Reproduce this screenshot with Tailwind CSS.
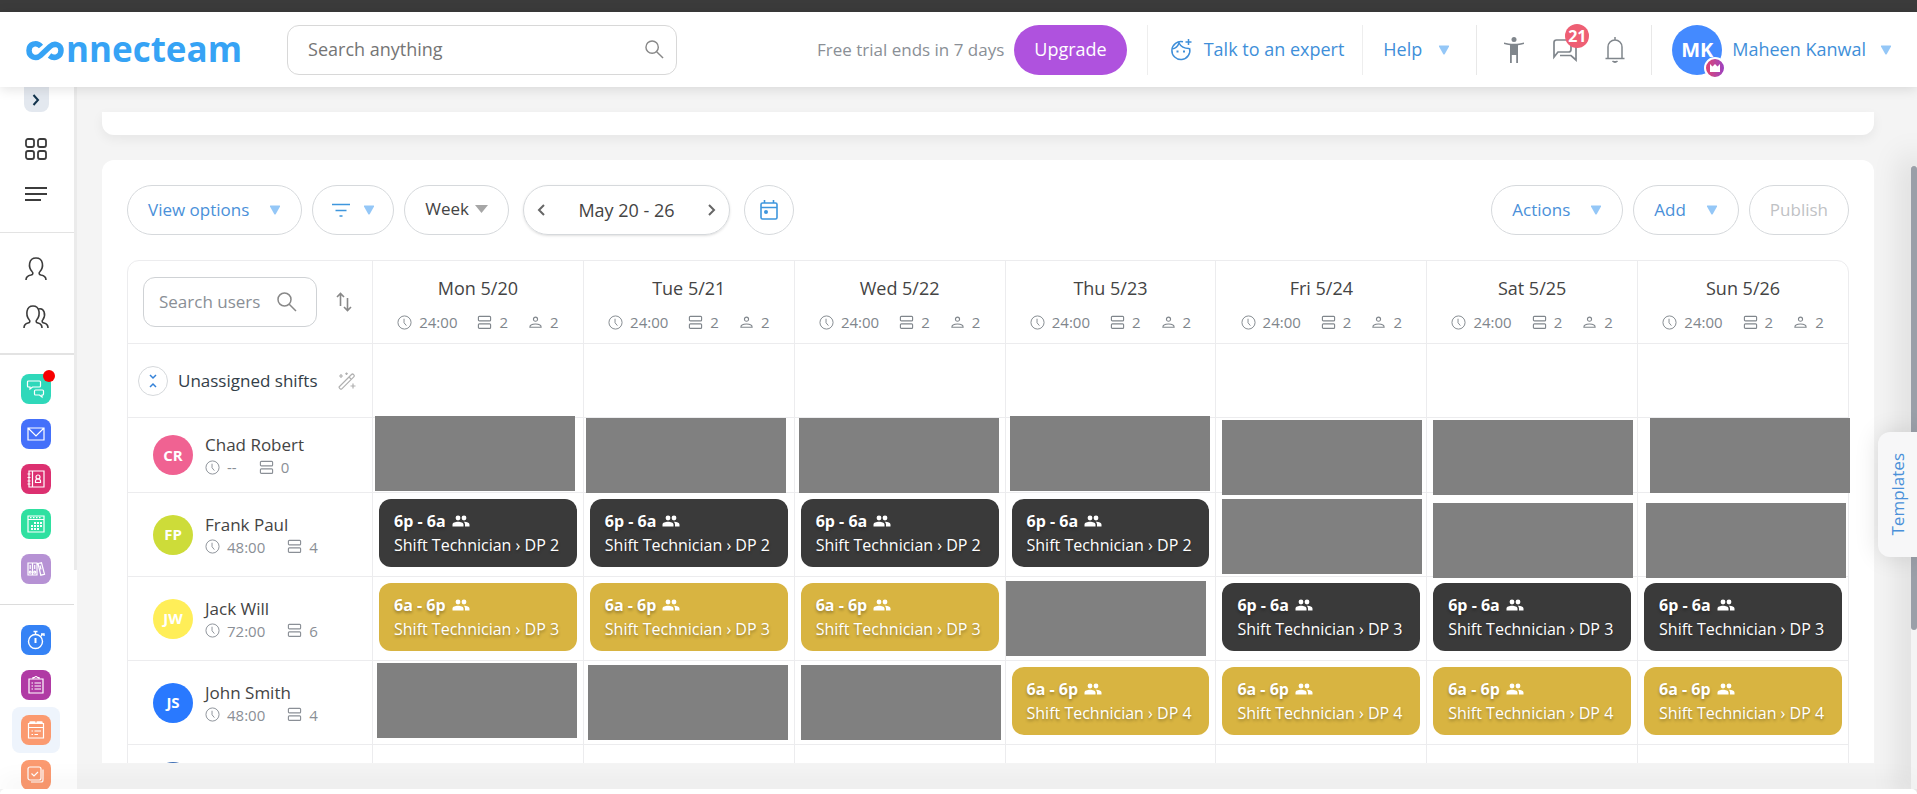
<!DOCTYPE html>
<html lang="en">
<head>
    <meta charset="UTF-8">
    <meta name="viewport" content="width=device-width, initial-scale=1.0">
    <title>Connecteam - Job Schedule</title>
    <script src="https://cdn.jsdelivr.net/npm/@tailwindcss/browser@4"></script>
</head>
<body class="flex h-screen flex-col overflow-hidden bg-[#f4f4f4] font-['Open_Sans',sans-serif] text-[#444]">
    <!-- shared icons -->
    <svg class="hidden">
        <symbol id="i-clock" viewBox="0 0 16 16"><g fill="none" stroke="currentColor" stroke-width="1"><circle cx="8" cy="8" r="7"/><path d="M7.500 4v4.300l2.500 3"/></g></symbol>
        <symbol id="i-rows" viewBox="0 0 16 16"><g fill="none" stroke="currentColor" stroke-width="1.200"><rect x="1.500" y="1.500" width="13" height="4.700" rx="1"/><rect x="1.500" y="9.500" width="13" height="4.700" rx="1"/></g></symbol>
        <symbol id="i-person" viewBox="0 0 16 16"><g fill="none" stroke="currentColor" stroke-width="1.200"><circle cx="8" cy="4.500" r="2.200"/><path d="M2 13c0-4.500 12-4.500 12 0z"/></g></symbol>
        <symbol id="i-search" viewBox="0 0 20 20"><g fill="none" stroke="currentColor" stroke-width="1.500"><circle cx="7.500" cy="7.500" r="6.500"/><path d="M12 12l7 7"/></g></symbol>
        <symbol id="i-caret" viewBox="0 0 12 10"><path d="M1.500.5h9q1 0 .5 1L6.800 9q-.8 1-1.600 0L1 1.500q-.5-1 .5-1z" fill="currentColor"/></symbol>
        <symbol id="i-group" viewBox="0 0 18 12"><g fill="currentColor"><circle cx="6" cy="3" r="2.400"/><circle cx="12" cy="3" r="2.400"/><path d="M.5 11.500V9.500C.5 5.800 11.500 5.800 11.500 9.500v2zM13 11.500V9.500c0-1.100-.5-2-1.300-2.700 2.600-.2 5.800.7 5.800 2.700v2z"/></g></symbol>
    </svg>

    <div class="h-3 shrink-0 bg-[#3b3b3b]"></div>

    <header class="relative z-20 flex h-[75px] shrink-0 items-center bg-white pr-[25px] pl-[26px] text-[18px] shadow-[0_2px_12px_rgba(0,0,0,0.12)]">
        <a href="#" aria-label="connecteam" class="flex items-center gap-0.5 text-[#36a3f5]">
            <svg class="h-8 w-[38px] shrink-0" viewBox="0 0 38 32" fill="none" stroke="currentColor" stroke-width="5.500"><path d="M15 12.500C10.500 7.500 3 10 3 16.500s7 9 11.500 5L24 12.500c4.500-4 11-2 11 4s-6.500 9-11.500 5"/></svg>
            <span class="-mt-0.5 text-[35px] leading-8 font-bold">nnecteam</span>
        </a>
        <label class="ml-[45px] flex h-[50px] w-[390px] items-center rounded-xl border border-[#d8d8d8] pr-3 pl-5">
            <input type="text" placeholder="Search anything" aria-label="Search anything" class="w-full outline-none placeholder:text-[#757575]">
            <svg class="size-[19px] shrink-0 text-[#888]"><use href="#i-search"/></svg>
        </label>
        <div class="ml-auto flex items-center">
            <span class="text-[17px] text-[#8a8f96]">Free trial ends in 7 days</span>
            <button class="ml-2.5 h-[50px] rounded-full bg-[#af52de] px-5 font-medium text-white">Upgrade</button>
            <a href="#" class="ml-5 flex h-[50px] items-center border-l border-[#eee] pr-[18px] pl-[22px] text-[#3f8fd9]">
                <svg class="mr-3 size-[22px]" viewBox="0 0 22 22" fill="none" stroke="currentColor" stroke-width="1.500"><path d="M13 2.800A9 9 0 1 0 19.500 9M2 10c4-.5 6-3 7-6 2 4 5 5.500 10 5.500"/><path d="M18.500 0v6M15.500 3h6"/><path d="M7.500 11.500v2M14 11.500v2" stroke-width="2"/></svg>
                Talk to an expert
            </a>
            <button class="flex h-[50px] items-center border-l border-[#eee] pr-[26px] pl-5 text-[#3f8fd9]">Help
                <svg class="ml-4 h-2.5 w-3 text-[#94c7f7]"><use href="#i-caret"/></svg>
            </button>
            <div class="flex h-[50px] items-center gap-7 border-x border-[#e8e8e8] px-[26px] text-[#80868c]">
                <button aria-label="Accessibility"><svg class="h-[26px] w-[22px]" viewBox="0 0 22 26" fill="currentColor"><circle cx="11" cy="2.500" r="2.500"/><path d="M1 5.500c6 1.700 14 1.700 20 0v1.500c-2 .6-4 1-6 1.200V26h-1.800v-8h-4.400v8H7V8.200C5 8 3 7.600 1 7z"/></svg></button>
                <button aria-label="Messages" class="relative"><svg class="size-6" viewBox="0 0 24 24" fill="none" stroke="currentColor" stroke-width="1.700"><path d="M1 19V4.500Q1 2 3.500 2h12Q18 2 18 4.500v7q0 2.500-2.500 2.500H5zM7 17.500h11l5 4.500V9.500Q23 7.500 20.500 7.500"/></svg>
                    <span class="absolute -top-3.5 left-3 flex size-6 items-center justify-center rounded-full bg-[#ee5f74] text-base font-bold text-white">21</span></button>
                <button aria-label="Notifications"><svg class="h-[26px] w-5" viewBox="0 0 20 26" fill="none" stroke="currentColor" stroke-width="1.500"><path d="M.5 21.500h19M3 21.500V10a7 7 0 0 1 14 0v11.500M10 0v3"/><path d="M7.500 24q2.500 2.500 5 0" fill="currentColor"/></svg></button>
            </div>
            <button class="ml-5 flex items-center text-[#3f8fd9]">
                <span class="relative flex size-[50px] items-center justify-center rounded-full bg-[#448aff] text-xl font-bold text-white">MK
                    <span class="absolute -right-1 -bottom-1 flex size-[22px] items-center justify-center rounded-full border-2 border-white bg-linear-to-r from-[#e0406f] to-[#9c3fc0]"><svg class="h-2 w-2.5" viewBox="0 0 10 8" fill="currentColor"><path d="M0 0l2.500 2.500L5 0l2.500 2.500L10 0v8H0z"/></svg></span>
                </span>
                <span class="ml-2.5">Maheen Kanwal</span>
                <svg class="ml-3.5 h-2.5 w-3 text-[#94c7f7]"><use href="#i-caret"/></svg>
            </button>
        </div>
    </header>

    <div class="relative flex min-h-0 flex-1">
        <!-- side navigation -->
        <nav class="flex w-[77px] shrink-0 overflow-hidden bg-white text-[#3c3c3c]">
            <div class="flex w-[74px] flex-col items-center">
                <div class="flex w-full shrink-0 flex-col items-center gap-[26px] border-b border-[#e3e3e3] pr-0.5 pb-[30px]">
                    <button aria-label="Expand" class="flex size-[25px] items-center justify-center rounded-b-lg bg-[#e3e8ef] text-[#12344d]"><svg class="h-3 w-2" viewBox="0 0 8 12" fill="none" stroke="currentColor" stroke-width="2"><path d="M1.500 1l4.500 5-4.500 5"/></svg></button>
                    <a href="#" aria-label="Overview"><svg class="size-[22px]" viewBox="0 0 22 22" fill="none" stroke="currentColor" stroke-width="1.800"><rect x="1" y="1" width="8" height="8" rx="2"/><rect x="13" y="1" width="8" height="8" rx="2"/><rect x="1" y="13" width="8" height="8" rx="2"/><rect x="13" y="13" width="8" height="8" rx="2"/></svg></a>
                    <a href="#" aria-label="Activity"><svg class="h-4 w-[22px]" viewBox="0 0 22 16" fill="none" stroke="currentColor" stroke-width="2.200"><path d="M0 2h22M0 8h22M0 14h16"/></svg></a>
                </div>
                <div class="flex w-full shrink-0 flex-col items-center gap-6 border-b-2 border-[#e3e3e3] pt-6 pr-0.5 pb-6">
                    <a href="#" aria-label="Users"><svg class="h-6 w-[22px]" viewBox="0 0 22 24" fill="none" stroke="currentColor" stroke-width="1.600"><path d="M1 23c0-3 2-4.500 5-5 2-.4 2.500-2 1-3.500C3 10 3.500 1 11 1s8 9 4 13.500c-1.500 1.500-1 3.100 1 3.500 3 .5 5 2 5 5"/></svg></a>
                    <a href="#" aria-label="Groups"><svg class="h-6 w-[26px]" viewBox="0 0 26 24" fill="none" stroke="currentColor" stroke-width="1.600"><path d="M1 23c0-3 1.500-4.500 4-5 2-.4 2.500-2 1-3.500C2.500 10 3 1 10 1s7.500 9 4 13.500c-1.500 1.500-1 3.100 1 3.500 2.500.5 4 2 4 5"/><path d="M15.500 4c6-1.500 7.500 6 4.500 10.500-1.500 1.500-1 3.100 1 3.500 2.500.5 4 2 4 5"/></svg></a>
                </div>
                <div class="flex w-full shrink-0 flex-col items-center gap-[15px] border-b border-[#dcdcdc] pt-[19px] pr-0.5 pb-5 text-white">
                    <a href="#" aria-label="Chat" class="relative flex size-[30px] items-center justify-center rounded-lg bg-[#2fd8ba]"><svg class="size-5" viewBox="0 0 20 20" fill="none" stroke="currentColor" stroke-width="1.200"><path d="M2.500 2h11q1 0 1 1v4q0 1-1 1H6.500L4 10V8H2.500q-1 0-1-1V3q0-1 1-1z"/><path d="M9.500 11h7q1 0 1 1v3q0 1-1 1H16v2l-2.500-2h-4q-1 0-1-1v-3q0-1 1-1z"/></svg>
                        <span class="absolute -top-1 -right-1 size-3 rounded-full bg-[#f80000]"></span></a>
                    <a href="#" aria-label="Updates" class="flex size-[30px] items-center justify-center rounded-lg bg-[#4470fa]"><svg class="size-5" viewBox="0 0 20 20" fill="none" stroke="currentColor" stroke-width="1.200"><path d="M2 4h16v12H2zM2 4l8 8 8-8"/></svg></a>
                    <a href="#" aria-label="Directory" class="flex size-[30px] items-center justify-center rounded-lg bg-[#dc3070]"><svg class="size-5" viewBox="0 0 20 20" fill="none" stroke="currentColor" stroke-width="1.200"><path d="M3 2h15v16H3zM6.500 2v16M1.500 5h3M1.500 8.500h3M1.500 12h3M1.500 15h3"/><circle cx="12" cy="8" r="2"/><path d="M9.500 13.500v-1.500q0-2 2.500-2t2.500 2v1.500z"/></svg></a>
                    <a href="#" aria-label="Events" class="flex size-[30px] items-center justify-center rounded-lg bg-[#2fe0a0]"><svg class="size-5" viewBox="0 0 20 20" fill="none" stroke="currentColor" stroke-width="1.200"><path d="M2 2h16v16H2zM2 5.500h16"/><path d="M4 3.700h12" stroke-dasharray="1.500 1.500"/><path d="M8 9h8M5 12h11M5 15h8" stroke-width="2" stroke-dasharray="2 1"/></svg></a>
                    <a href="#" aria-label="Knowledge base" class="flex size-[30px] items-center justify-center rounded-lg bg-[#b692d4]"><svg class="size-5" viewBox="0 0 20 20" fill="none" stroke="currentColor" stroke-width="1.200"><path d="M2 4h4.500v12H2zM6.500 4H11v12H6.500zM12 4.500l3.500-.7 3 11.500-3.700.9z"/><path d="M4.200 6v4M8.700 6v4M14 6.500l1 4"/><circle cx="4.200" cy="13.200" r="1"/><circle cx="8.700" cy="13.200" r="1"/></svg></a>
                </div>
                <div class="flex w-full shrink-0 flex-col items-center gap-[15px] pt-5 pr-0.5 text-white">
                    <a href="#" aria-label="Time clock" class="flex size-[30px] items-center justify-center rounded-lg bg-[#3582f5]"><svg class="size-5" viewBox="0 0 20 20" fill="none" stroke="currentColor" stroke-width="1.400"><circle cx="9.500" cy="11.500" r="7"/><path d="M9.500 4.500V2M7.500 1.500h4M15 6l1.500-1.500M15 4h3v2"/><path d="M9.500 8v5" stroke-width="2"/></svg></a>
                    <a href="#" aria-label="Forms" class="flex size-[30px] items-center justify-center rounded-lg bg-[#b03aa4]"><svg class="size-5" viewBox="0 0 20 20" fill="none" stroke="currentColor" stroke-width="1.200"><path d="M3 4h14v14H3zM7 4V2.500h1.500Q10 .5 11.500 2.500H13V4M8.500 8H15M8.500 11H15M8.500 14H15M5.500 8H7M5.500 11H7M5.500 14H7"/></svg></a>
                    <a href="#" aria-label="Job schedule" class="-my-2 flex h-[46px] w-12 items-center justify-center rounded-lg bg-[#eef4fc]"><span class="flex size-[30px] items-center justify-center rounded-lg bg-[#fb9a70]"><svg class="size-5" viewBox="0 0 20 20" fill="none" stroke="currentColor" stroke-width="1.200"><path d="M2.500 3.500h15V18h-15zM2.500 7.500h15M5.500 11h1.500M8.500 11h6.500M5.500 14.500H7M8.500 14.500H12"/><path d="M4.500 2.500h4M11.500 2.500h4" stroke-width="2.500" stroke-linecap="round"/></svg></span></a>
                    <a href="#" aria-label="Quick tasks" class="flex size-[30px] items-center justify-center rounded-lg bg-[#fb9a70]"><svg class="size-5" viewBox="0 0 20 20" fill="none" stroke="currentColor" stroke-width="1.200"><rect x="2" y="2" width="13" height="13" rx="2"/><path d="M17 4.500v10.500q0 2-2 2H5M5.500 8.500l2.500 2.500 4-4"/></svg></a>
                </div>
            </div>
            <div class="h-[483px] w-[3px] bg-[#ebebeb]"></div>
        </nav>

        <main class="flex min-w-0 flex-1 flex-col pt-[25px] pr-[37px] pb-[26px] pl-[25px]">
            <section class="h-[23px] shrink-0 rounded-b-xl bg-white shadow-[0_4px_12px_rgba(0,0,0,0.06)]"></section>

            <section class="mt-[25px] min-h-0 flex-1 overflow-hidden rounded-t-xl bg-white px-[25px] pt-[25px]">
                <div class="flex h-[50px] items-center text-[17px]">
                    <button class="flex h-[50px] items-center rounded-full border border-[#d6d9dc] px-5 text-[#4a90d9]">View options<svg class="ml-5 h-2.5 w-3 text-[#94c7f7]"><use href="#i-caret"/></svg></button>
                    <button aria-label="Filter" class="ml-2.5 flex h-[50px] items-center rounded-full border border-[#d6d9dc] px-[18px] text-[#3e96dd]"><svg class="h-3.5 w-5" viewBox="0 0 20 14" fill="none" stroke="currentColor" stroke-width="1.600"><path d="M1 1.500h18M4.500 7.500h11M8.500 13h3"/></svg><svg class="ml-3 h-2.5 w-3 text-[#94c7f7]"><use href="#i-caret"/></svg></button>
                    <button class="ml-2.5 flex h-[50px] items-center rounded-full border border-[#d6d9dc] px-5 pb-0.5">Week<svg class="ml-1.5 h-2 w-[13px] text-[#a6a6a6]" viewBox="0 0 13 8" fill="currentColor"><path d="M0 0h13L6.500 8z"/></svg></button>
                    <div class="ml-3.5 flex h-[50px] w-[207px] items-center justify-between rounded-full border border-[#d6d9dc] px-3 text-[18px] shadow-sm">
                        <button aria-label="Previous week"><svg class="h-3.5 w-2.5 text-[#666]" viewBox="0 0 10 14" fill="none" stroke="currentColor" stroke-width="2"><path d="M8 2L3 7l5 5"/></svg></button>
                        <span>May 20 - 26</span>
                        <button aria-label="Next week"><svg class="h-3.5 w-2.5 text-[#666]" viewBox="0 0 10 14" fill="none" stroke="currentColor" stroke-width="2"><path d="M2 2l5 5-5 5"/></svg></button>
                    </div>
                    <button aria-label="Today" class="ml-3.5 flex size-[50px] items-center justify-center rounded-full border border-[#d6d9dc] text-[#3e96dd]"><svg class="h-5 w-[18px]" viewBox="0 0 18 20" fill="none" stroke="currentColor" stroke-width="1.600"><rect x="1" y="3" width="16" height="16" rx="1.500"/><path d="M1 7.500h16M4.500 0v3M13.500 0v3"/><circle cx="6" cy="12" r="2" fill="currentColor" stroke="none"/></svg></button>

                    <button class="ml-auto flex h-[50px] items-center rounded-full border border-[#d6d9dc] px-5 text-[#4a90d9]">Actions<svg class="ml-5 h-2.5 w-3 text-[#94c7f7]"><use href="#i-caret"/></svg></button>
                    <button class="ml-2.5 flex h-[50px] items-center rounded-full border border-[#d6d9dc] px-5 text-[#4a90d9]">Add<svg class="ml-5 h-2.5 w-3 text-[#94c7f7]"><use href="#i-caret"/></svg></button>
                    <button disabled class="ml-2.5 h-[50px] rounded-full border border-[#d6d9dc] px-5 text-[#bfc2c5]">Publish</button>
                </div>

                <div class="mt-[25px] rounded-t-xl border border-[#ececee]">
                    <table class="w-full table-fixed border-separate border-spacing-0">
                        <thead>
                            <tr id="days">
                                <th class="h-[83px] w-[244px] border-b border-[#ececee] p-0 font-normal">
                                    <div class="flex items-center pl-[15px]">
                                        <label class="flex h-[50px] w-[174px] items-center rounded-xl border border-[#cfd2d5] px-[15px]">
                                            <input type="text" placeholder="Search users" aria-label="Search users" class="w-[112px] text-[17px] outline-none placeholder:text-[#8a8f96]">
                                            <svg class="ml-1.5 size-5 shrink-0 text-[#888]"><use href="#i-search"/></svg>
                                        </label>
                                        <button aria-label="Sort" class="ml-[19px] text-[#888]"><svg class="h-5 w-4" viewBox="0 0 16 20" fill="none" stroke="currentColor" stroke-width="1.600"><path d="M4.500 14V1.500M1 5l3.500-3.500L8 5M11.500 6v12.500M8 15l3.500 3.500L15 15"/></svg></button>
                                    </div>
                                </th>
                            </tr>
                        </thead>
                        <tbody id="rows">
                            <tr>
                                <th class="h-[74px] border-b border-[#ececee] p-0 text-left font-normal">
                                    <div class="flex items-center pl-2.5 text-[17px] text-[#333e48]">
                                        <button aria-label="Collapse" class="flex size-[30px] items-center justify-center rounded-full border border-[#d6d9dc] text-[#3582d8]"><svg class="h-3.5 w-2" viewBox="0 0 8 14" fill="none" stroke="currentColor" stroke-width="1.500"><path d="M1 1l3 3 3-3M1 13l3-3 3 3"/></svg></button>
                                        <span class="ml-2.5 w-[144px] whitespace-nowrap">Unassigned shifts</span>
                                        <svg class="ml-4 size-[18px] text-[#b0b0b0]" viewBox="0 0 18 18" fill="none" stroke="currentColor" stroke-width="1.200"><path d="M1.500 14.500l12-12q1-1 2 0l.3.300q1 1 0 2l-12 12q-.8.800-1.600 0l-.700-.700q-.8-.8 0-1.600zM11 5l2.300 2.300"/><path d="M3 2v4M1 4h4M8.500.5v2.500M7.300 1.700h2.500M15 11.500v5M12.500 14h5"/></svg>
                                    </div>
                                </th>
                            </tr>
                        </tbody>
                    </table>
                </div>
            </section>
        </main>

        <!-- page scrollbar -->
        <div class="mt-[79px] w-1.5 shrink-0 shadow-[0_0_30px_10px_rgba(0,0,0,0.1)]">
            <div class="h-[464px] rounded bg-[#9a9fa8]"></div>
        </div>
        <button class="absolute top-[345px] right-0 flex h-[125px] w-[39px] items-center justify-center rounded-l-xl bg-[#f7f7f8] text-[17px] text-[#4a90d9] shadow-[0_0_24px_rgba(0,0,0,0.12)]"><span class="rotate-180 [writing-mode:vertical-rl]">Templates</span></button>
    </div>

    <footer class="relative z-10 h-[5px] shrink-0 rounded-t-lg bg-white shadow-[0_-4px_24px_rgba(0,0,0,0.14)]"></footer>

    <script>
        const days = ['Mon 5/20', 'Tue 5/21', 'Wed 5/22', 'Thu 5/23', 'Fri 5/24', 'Sat 5/25', 'Sun 5/26'];

        const N2 = ['6p - 6a', 'Shift Technician › DP 2', 'bg-[#3a3a3a]'];
        const N3 = ['6p - 6a', 'Shift Technician › DP 3', 'bg-[#3a3a3a]'];
        const D3 = ['6a - 6p', 'Shift Technician › DP 3', 'bg-[#d8b441]'];
        const D4 = ['6a - 6p', 'Shift Technician › DP 4', 'bg-[#d8b441]'];

        // a string is the position of an unavailability block in its cell
        const users = [
            { name: 'Chad Robert', initials: 'CR', color: 'bg-[#f06292]', hours: '--', shifts: 0, height: 'h-[75px]',
              week: ['-top-0.5 left-0.5', 'top-0 left-0.5', 'top-0 left-1', '-top-0.5 left-1', 'top-0.5 left-1.5', 'top-0.5 left-1.5', 'top-0 left-3'] },
            { name: 'Frank Paul', initials: 'FP', color: 'bg-[#cddc39]', hours: '48:00', shifts: 4, height: 'h-[84px]',
              week: [N2, N2, N2, N2, 'top-1.5 left-1.5', 'top-2.5 left-1.5', 'top-2.5 left-2'] },
            { name: 'Jack Will', initials: 'JW', color: 'bg-[#ffee58]', hours: '72:00', shifts: 6, height: 'h-[84px]',
              week: [D3, D3, D3, 'top-1 left-0', N3, N3, N3] },
            { name: 'John Smith', initials: 'JS', color: 'bg-[#2979ff]', hours: '48:00', shifts: 4, height: 'h-[84px]',
              week: ['top-0.5 left-1', 'top-1 left-1', 'top-1 left-1.5', D4, D4, D4, D4] },
            { name: '', initials: '', color: 'bg-[#3f6fb5]', height: 'h-[75px]', week: ['', '', '', '', '', '', ''] }
        ];

        function cell(item) {
            let body = '';
            if (Array.isArray(item)) {
                body = `<button class="mx-1.5 mt-1.5 flex h-[68px] w-[calc(100%-12px)] flex-col items-start rounded-xl pt-2.5 pl-[15px] text-base leading-6 whitespace-nowrap text-white text-shadow-[0_2px_3px_rgba(0,0,0,0.3)] ${item[2]}">
                    <span class="flex items-center gap-1.5 font-bold">${item[0]}<svg class="h-3 w-[18px]"><use href="#i-group"/></svg></span>
                    <span class="font-medium">${item[1]}</span>
                </button>`;
            } else if (item) {
                body = `<div class="absolute z-10 h-[75px] w-[200px] bg-[#808080] ${item}"></div>`;
            }
            return `<td class="relative border-b border-l border-[#ececee] p-0 align-top">${body}</td>`;
        }

        function details(user) {
            return `<div class="ml-3">
                <div class="text-[17px] leading-6">${user.name}</div>
                <div class="flex items-center text-[15px] leading-5 text-[#8a8f96]">
                    <svg class="size-[15px]"><use href="#i-clock"/></svg><span class="ml-[7px]">${user.hours}</span>
                    <svg class="ml-[22px] size-[15px]"><use href="#i-rows"/></svg><span class="ml-[7px]">${user.shifts}</span>
                </div>
            </div>`;
        }

        document.getElementById('days').innerHTML += days.map(day => `
            <th class="border-b border-l border-[#ececee] p-0 font-normal">
                <div class="pt-1 text-[18px] leading-6">${day}</div>
                <div class="mt-3 flex items-center justify-center text-[15px] leading-5 text-[#80868c]">
                    <svg class="size-[15px]"><use href="#i-clock"/></svg><span class="ml-[7px]">24:00</span>
                    <svg class="ml-5 size-[15px]"><use href="#i-rows"/></svg><span class="ml-[7px]">2</span>
                    <svg class="ml-5 size-[15px]"><use href="#i-person"/></svg><span class="ml-[7px]">2</span>
                </div>
            </th>`).join('');

        const rows = document.getElementById('rows');
        rows.rows[0].innerHTML += days.map(() => cell('')).join('');
        rows.innerHTML += users.map(user => `
            <tr>
                <th class="border-b border-[#ececee] p-0 text-left font-normal ${user.height}">
                    <div class="flex items-center pl-[25px]">
                        <span class="flex size-10 items-center justify-center rounded-full text-[15px] font-bold text-white ${user.color}">${user.initials}</span>
                        ${user.name ? details(user) : ''}
                    </div>
                </th>
                ${user.week.map(cell).join('')}
            </tr>`).join('');
    </script>
</body>
</html>
